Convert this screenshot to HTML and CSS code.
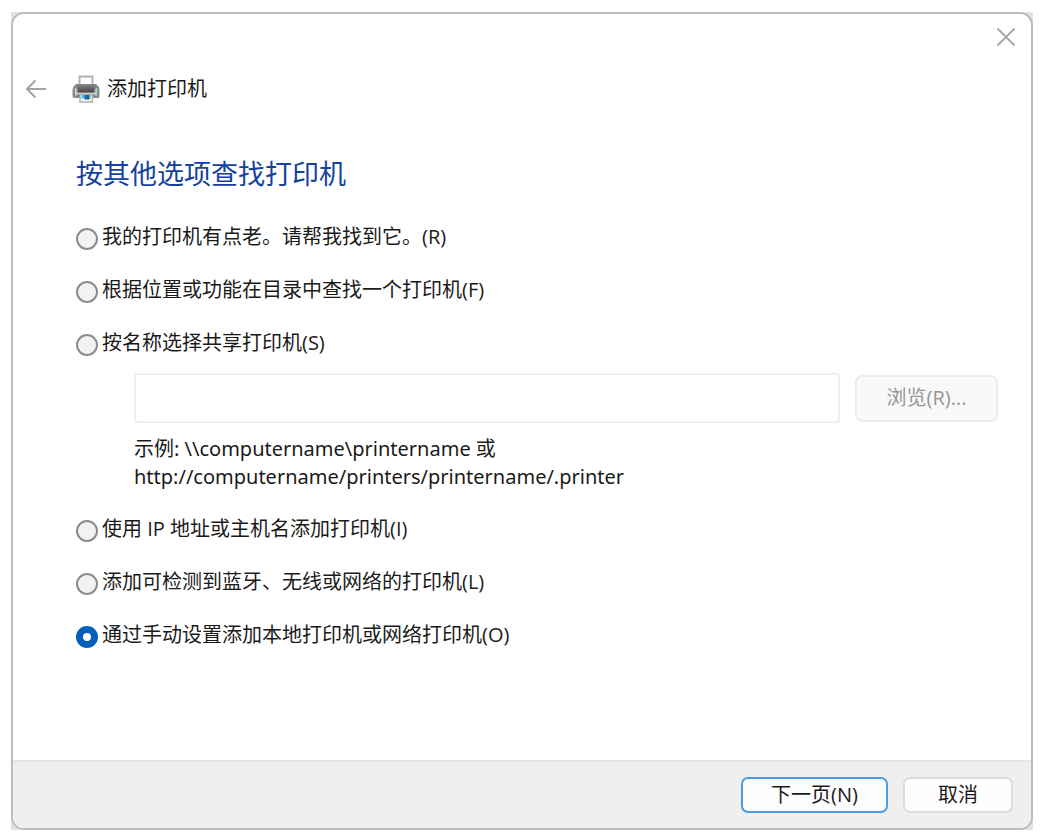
FILE: index.html
```html
<!DOCTYPE html>
<html lang="zh-CN">
<head>
<meta charset="utf-8">
<meta name="viewport" content="width=device-width, initial-scale=1">
<title>添加打印机</title>
<link rel="stylesheet" href="styles.css">
</head>
<body>
<div class="backdrop">
  <form class="wizard">
    <div class="caption">
      <button class="icon-button" type="button" aria-label="关闭">
        <svg width="20" height="20" viewBox="0 0 20 20" fill="none" stroke="#a6a6a6" stroke-width="1.8"><path d="M1.500 1.500l17 17M18.500 1.500l-17 17"/></svg>
      </button>
    </div>
    <header class="header">
      <button class="icon-button" type="button" aria-label="返回">
        <svg width="22" height="20" viewBox="0 0 22 20" fill="none" stroke="#a3a3a3" stroke-width="2"><path d="M21 10H2M10.500 1.500L2 10l8.500 8.500"/></svg>
      </button>
      <svg class="printer" width="28" height="28" viewBox="0 0 28 28">
        <defs>
          <linearGradient id="lid" x1="0" y1="0" x2="0" y2="1">
            <stop offset="0" stop-color="#8a8a8a"/>
            <stop offset="1" stop-color="#454545"/>
          </linearGradient>
        </defs>
        <path d="M7.500 11V1.500h13V11" fill="#fdfdfd" stroke="#b2b2b2" stroke-width="2"/>
        <path d="M4 9h20q3 2 3.500 6v6q0 2-2 2h-23q-2 0-2-2v-6Q1 11 4 9z" fill="#85898c"/>
        <path d="M3 14h22v7H3z" fill="#b4b8bb"/>
        <path d="M5.500 9h17v8.500h-17z" fill="url(#lid)"/>
        <path d="M3.500 13v5.500h21V13" fill="none" stroke="#d4d6d8"/>
        <path d="M5.500 20.500h17" stroke="#666a6d" stroke-width="2"/>
        <path d="M24 14.500h2v2h-2z" fill="#6fe06f"/>
        <path d="M8 19.500h12.500v7.500H8z" fill="#f6f8f9" stroke="#b2b2b2" stroke-width="1.500"/>
        <path d="M9.500 20h3.500v3.500H9.500z" fill="#58b8ee"/>
        <path d="M12.500 20H15v4.500h-2.500z" fill="#1668b8"/>
        <path d="M15 20h2.500v4.500H15z" fill="#1f6b52"/>
        <path d="M17.500 20H19v3.500h-1.500z" fill="#6bb6d8"/>
      </svg>
      <span class="header-title">添加打印机</span>
    </header>
    <main class="content">
      <h1 class="heading">按其他选项查找打印机</h1>
      <div class="options">
        <label class="option"><input class="radio" type="radio" name="method"><span class="option-text">我的打印机有点老。请帮我找到它。(R)</span></label>
        <label class="option"><input class="radio" type="radio" name="method"><span class="option-text">根据位置或功能在目录中查找一个打印机(F)</span></label>
        <label class="option"><input class="radio" type="radio" name="method"><span class="option-text">按名称选择共享打印机(S)</span></label>
      </div>
      <div class="shared">
        <div class="shared-row">
          <input class="path" type="text" aria-label="共享打印机名称" aria-describedby="example" disabled>
          <button class="button browse" type="button" disabled>浏览(R)...</button>
        </div>
        <p class="example" id="example">示例: \\computername\printername 或<br>http://computername/printers/printername/.printer</p>
      </div>
      <div class="options">
        <label class="option"><input class="radio" type="radio" name="method"><span class="option-text">使用 IP 地址或主机名添加打印机(I)</span></label>
        <label class="option"><input class="radio" type="radio" name="method"><span class="option-text">添加可检测到蓝牙、无线或网络的打印机(L)</span></label>
        <label class="option"><input class="radio" type="radio" name="method" checked><span class="option-text">通过手动设置添加本地打印机或网络打印机(O)</span></label>
      </div>
    </main>
    <footer class="footer">
      <button class="button next" type="submit">下一页(N)</button>
      <button class="button cancel" type="button">取消</button>
    </footer>
  </form>
</div>
</body>
</html>
```
FILE: styles.css
```css
* {
  box-sizing: border-box;
}

body {
  display: flex;
  min-height: 100vh;
  margin: 0;
  padding: 12px 11px 9px 11px;
  background: #fff;
  color: #1a1a1a;
  font: 20px/28px "Open Sans", "Noto Sans CJK SC", sans-serif;
}

.backdrop {
  display: flex;
  flex: 1;
  background: #e2e2e2;
}

.wizard {
  display: flex;
  flex: 1;
  flex-direction: column;
  overflow: hidden;
  border: 2px solid #bdbdbd;
  border-radius: 13px;
  background: #fff;
}

.caption {
  display: flex;
  justify-content: flex-end;
  padding: 13px 15px 0;
}

.icon-button {
  display: flex;
  padding: 0;
  border: 0;
  background: none;
}

.header {
  display: flex;
  align-items: center;
  padding: 28px 12px 0;
}

.printer {
  margin: 0 7px 0 25px;
}

.content {
  flex: 1;
  padding: 53px 33px 0 63px;
}

.heading {
  margin: 0 0 33px;
  color: #14429e;
  font-size: 27px;
  font-weight: 400;
  line-height: 36px;
}

.options {
  display: flex;
  flex-direction: column;
  align-items: flex-start;
  gap: 25px;
}

.option {
  display: flex;
  align-items: center;
  gap: 4px;
}

.option-text {
  padding-bottom: 4px;
  line-height: 24px;
}

.radio {
  flex: none;
  width: 22px;
  height: 22px;
  margin: 0;
  appearance: none;
  border: 2px solid #8c8c8c;
  border-radius: 50%;
  background: #f2f2f2;
}

.radio:checked {
  border: 7px solid #005fb8;
  background: #fff;
}

.shared {
  padding: 14px 0 26px 58px;
}

.shared-row {
  display: flex;
  align-items: center;
  gap: 15px;
}

.path {
  flex: 1;
  min-width: 0;
  height: 50px;
  padding: 0 12px;
  border: 2px solid #efefef;
  border-radius: 3px;
  background: #fff;
  font: inherit;
}

.example {
  margin: 12px 0 0;
  font-family: "Noto Sans", "Noto Sans CJK SC", sans-serif;
}

.button {
  height: 36px;
  padding: 0;
  border: 2px solid #dcdcdc;
  border-radius: 7px;
  background: #fdfdfd;
  color: #1a1a1a;
  font: inherit;
  line-height: 28px;
}

.browse {
  width: 143px;
  height: 47px;
  border-color: #ededed;
  background: #f9f9f9;
  color: #969696;
}

.footer {
  display: flex;
  justify-content: flex-end;
  gap: 15px;
  padding: 15px 18px;
  border-top: 2px solid #e5e5e5;
  background: #efefef;
}

.next {
  width: 147px;
  border-color: #4a9ce0;
}

.cancel {
  width: 110px;
}
```
